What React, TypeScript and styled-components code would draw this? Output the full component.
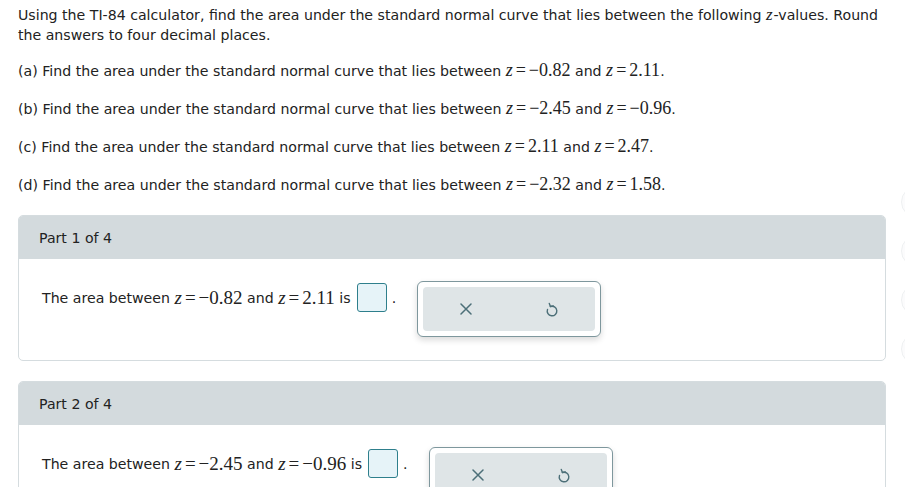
import React from "react";
import styled, { createGlobalStyle } from "styled-components";

const GlobalStyle = createGlobalStyle`
  html, body {
    margin: 0;
    padding: 0;
    background: #fff;
  }
  body {
    font-family: "DejaVu Sans", Verdana, sans-serif;
    font-size: 14.15px;
    color: #222;
    overflow: hidden;
  }
`;

const Page = styled.div`
  width: 868px;
  padding: 5px 0 0 18px;
`;

const Intro = styled.p`
  margin: 0;
  line-height: 20px;
`;

const QuestionList = styled.div`
  display: flex;
  flex-direction: column;
  gap: 16px;
  margin-top: 15px;
  margin-bottom: 19px;
`;

const QLine = styled.p`
  margin: 0;
  line-height: 22px;
`;

const MathText = styled.span<{ $size?: number }>`
  font-family: "Liberation Serif", "Times New Roman", serif;
  font-size: ${(p) => p.$size ?? 17}px;
  line-height: 1;
  white-space: nowrap;
`;

const Var = styled.i`
  font-family: "Liberation Serif", "Times New Roman", serif;
  font-style: italic;
  padding-right: 1px;
`;

const Eq = styled.span`
  padding: 0 3px 0 2px;
`;

const Card = styled.section`
  border: 1px solid #d5dcdf;
  border-radius: 5px;
  overflow: hidden;
  margin-bottom: 20px;
`;

const CardHead = styled.div`
  background: #d3dadd;
  height: 43px;
  display: flex;
  align-items: center;
  padding-left: 20px;
`;

const CardBody = styled.div`
  height: 79px;
  padding: 22px 0 0 23px;
`;

const Row = styled.div`
  display: flex;
  align-items: flex-start;
  white-space: nowrap;
`;

const Sentence = styled.div`
  display: flex;
  align-items: center;
  height: 29px;
  margin-top: 2px;
`;

const Blank = styled.span`
  display: inline-block;
  width: 28px;
  height: 27px;
  border: 1px solid #2e7f8c;
  border-radius: 3px;
  background: #e6f3f8;
  margin-left: 6px;
`;

const Dot = styled.span`
  margin-left: 5px;
  margin-right: 21px;
`;

const Tools = styled.div`
  display: flex;
  padding: 5px;
  border: 1px solid #7e979d;
  border-radius: 6px;
  background: #fff;
  box-shadow: 0 3px 6px rgba(0, 0, 0, 0.15);
`;

const ToolPad = styled.div`
  display: flex;
  width: 172px;
  height: 44px;
  background: #dfe5e7;
  border-radius: 4px;
`;

const ToolBtn = styled.button`
  flex: 1;
  border: 0;
  background: transparent;
  display: flex;
  align-items: center;
  justify-content: center;
  color: #4c6f78;
  padding: 0;
`;

const Rail = styled.div`
  position: fixed;
  top: 186px;
  right: -28px;
  display: flex;
  flex-direction: column;
  gap: 17px;
`;

const RailDot = styled.span`
  width: 30px;
  height: 30px;
  border-radius: 50%;
  border: 1px solid #eef0f1;
  background: #fbfbfc;
`;

const XIcon = () => (
  <svg width="12" height="12" viewBox="0 0 12 12">
    <path d="M1 1 L11 11 M11 1 L1 11" stroke="currentColor" strokeWidth="1.5" strokeLinecap="round" />
  </svg>
);

const UndoIcon = () => (
  <svg width="14" height="16" viewBox="0 0 14 16">
    <path
      d="M5.4 5.5 A4.8 4.8 0 1 1 2.5 8.4"
      fill="none"
      stroke="currentColor"
      strokeWidth="1.4"
      strokeLinecap="round"
    />
    <path
      d="M4.3 2.4 L5.4 5.5 L8.4 4.9"
      fill="none"
      stroke="currentColor"
      strokeWidth="1.4"
      strokeLinecap="round"
      strokeLinejoin="round"
    />
  </svg>
);

const Z = ({ v, size }: { v: string; size?: number }) => (
  <MathText $size={size}>
    <Var>z</Var>
    <Eq>=</Eq>
    {v}
  </MathText>
);

const questions = [
  { key: "a", a: "\u22120.82", b: "2.11" },
  { key: "b", a: "\u22122.45", b: "\u22120.96" },
  { key: "c", a: "2.11", b: "2.47" },
  { key: "d", a: "\u22122.32", b: "1.58" },
];

const parts = [
  { n: 1, a: "\u22120.82", b: "2.11" },
  { n: 2, a: "\u22122.45", b: "\u22120.96" },
];

export default function App() {
  return (
    <>
      <GlobalStyle />
      <Page>
        <Intro>
          Using the TI-84 calculator, find the area under the standard normal curve that lies between the following{" "}
          <MathText>
            <Var>z</Var>
          </MathText>
          -values. Round the answers to four decimal places.
        </Intro>

        <QuestionList>
          {questions.map((q) => (
            <QLine key={q.key}>
              ({q.key}) Find the area under the standard normal curve that lies between <Z v={q.a} size={18} /> and{" "}
              <Z v={q.b} size={18} />.
            </QLine>
          ))}
        </QuestionList>

        {parts.map((p) => (
          <Card key={p.n}>
            <CardHead>Part {p.n} of 4</CardHead>
            <CardBody>
              <Row>
                <Sentence>
                  The area between&nbsp;<Z v={p.a} size={19} />
                  &nbsp;and&nbsp;<Z v={p.b} size={19} />
                  &nbsp;is
                  <Blank />
                  <Dot>.</Dot>
                </Sentence>
                <Tools>
                  <ToolPad>
                    <ToolBtn aria-label="clear">
                      <XIcon />
                    </ToolBtn>
                    <ToolBtn aria-label="undo">
                      <UndoIcon />
                    </ToolBtn>
                  </ToolPad>
                </Tools>
              </Row>
            </CardBody>
          </Card>
        ))}
      </Page>
      <Rail>
        <RailDot />
        <RailDot />
        <RailDot />
        <RailDot />
      </Rail>
    </>
  );
}
